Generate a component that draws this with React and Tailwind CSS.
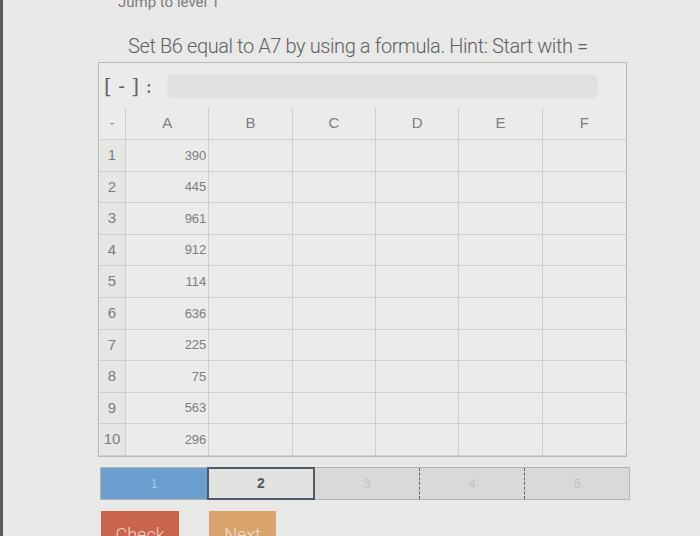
const rows = [390, 445, 961, 912, 114, 636, 225, 75, 563, 296];
const cols = ["A", "B", "C", "D", "E", "F"];

const Cell = ({ children, className = "" }) => (
    <div className={`h-[31.6px] border-b border-r border-[#cfcfcd] flex items-center text-[13px] text-[#7a7d82] ${className}`}>
        {children}
    </div>
);

export default function App() {
    return (
        <div className="relative w-[700px] h-[536px] overflow-hidden bg-[#e8e8e6] border-l-[3px] border-[#5a5a5a] font-['Liberation_Sans',Arial,sans-serif]">
            {/* Jump to level */}
            <div className="-mt-[7px] pl-[115px] text-[15px] leading-[18px] text-[#7d7d7d] font-['Roboto',sans-serif]">
                Jump to level 1
            </div>

            {/* Instructions */}
            <div className="mt-[23px] pl-[125px] text-[20px] leading-[24px] text-[#5f6166] font-['Roboto',sans-serif] font-light tracking-[-0.4px]">
                Set B6 equal to A7 by using a formula. Hint: Start with =
            </div>

            {/* Spreadsheet box */}
            <div className="mt-[4px] ml-[95px] w-[529px] border border-[#b9b9b7] bg-[#ebebe9]">
                <div className="h-[45px] flex items-center pl-[5px] pr-[28px]">
                    <span className="text-[20px] text-[#5b6472] font-['DejaVu_Serif',serif] w-[63px] whitespace-pre">
                        [ - ] :
                    </span>
                    <div className="flex-1 h-[24px] rounded-[6px] bg-[#e1e1df]"></div>
                </div>

                <div className="grid grid-cols-[27px_repeat(6,1fr)]">
                    {/* header row */}
                    <div className="h-[32px] border-b border-r border-[#cfcfcd] flex items-center justify-center text-[14px] text-[#8a8a8a]">-</div>
                    {cols.map((c, i) => (
                        <div
                            key={c}
                            className={`h-[32px] border-b border-[#cfcfcd] flex items-center justify-center text-[15px] text-[#7d7f84] ${i < 5 ? "border-r" : ""}`}
                        >
                            {c}
                        </div>
                    ))}

                    {rows.map((v, r) => (
                        <div key={r} className="contents">
                            <Cell className="justify-center text-[15px] text-[#6e6e6e] bg-[#e6e6e4]">{r + 1}</Cell>
                            <Cell className="justify-end pr-[2px]">{v}</Cell>
                            <Cell />
                            <Cell />
                            <Cell />
                            <Cell />
                            <Cell className="border-r-0" />
                        </div>
                    ))}
                </div>
            </div>

            {/* Level progress */}
            <div className="mt-[10px] ml-[97px] w-[530px] h-[33px] flex bg-[#d9d9d7] border border-[#b3b3b1] text-[13px]">
                <div className="w-[106px] bg-[#6c9fd0] flex items-center justify-center text-[#a8c7e6]">1</div>
                <div className="w-[108px] -my-[1px] border-2 border-[#4d5a6c] bg-[#e2e2e0] flex items-center justify-center font-bold text-[14px] text-[#555]">2</div>
                <div className="w-[104px] flex items-center justify-center text-[#c2c2c0]">3</div>
                <div className="w-[105px] border-l border-dashed border-[#666] flex items-center justify-center text-[#c2c2c0]">4</div>
                <div className="flex-1 border-l border-dashed border-[#666] flex items-center justify-center text-[#c2c2c0]">5</div>
            </div>

            {/* Buttons */}
            <div className="mt-[11px] ml-[98px] flex gap-[30px]">
                <button className="w-[78px] h-[34px] bg-[#c9654c] text-[#efd3c8] text-[18px] pt-[10px] font-['Roboto',sans-serif] font-light">
                    Check
                </button>
                <button className="w-[67px] h-[34px] bg-[#d8a36c] text-[#f3dfcb] text-[18px] pt-[10px] font-['Roboto',sans-serif] font-light">
                    Next
                </button>
            </div>
        </div>
    );
}
